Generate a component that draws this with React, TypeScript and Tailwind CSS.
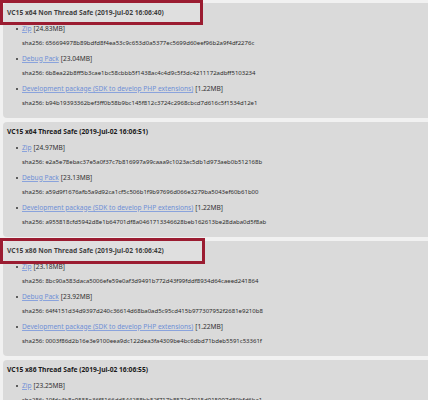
import React from "react";

type Item = { label: string; size: string; sha: string };
type Panel = { title: string; items: Item[] };

const DEV = "Development package (SDK to develop PHP extensions)";

const panels: Panel[] = [
  {
    title: "VC15 x64 Non Thread Safe (2019-Jul-02 16:06:40)",
    items: [
      { label: "Zip", size: "[24.83MB]", sha: "656694978b89bdfd8f4ea53c9c653d0a5377ec5699d60eef96b2a9f4df2276c" },
      { label: "Debug Pack", size: "[23.04MB]", sha: "6b8ea22b8ff5b3cae1bc58cbbb5f1438ac4c4d9c5f3dc4211172adbff5103234" },
      { label: DEV, size: "[1.22MB]", sha: "b94b19393362bef3ff0b58b9bc145f812c3724c2968cbcd7d616c5f1534d12e1" },
    ],
  },
  {
    title: "VC15 x64 Thread Safe (2019-Jul-02 16:06:51)",
    items: [
      { label: "Zip", size: "[24.97MB]", sha: "e2a5e78ebac37e5a0f37c7b816997a99caaa9c1023ac5db1d973aeb0b512168b" },
      { label: "Debug Pack", size: "[23.13MB]", sha: "a59d9f1676afb5a9d92ca1cf5c506b1f9b97696d066e3279ba5043ef60b61b00" },
      { label: DEV, size: "[1.22MB]", sha: "a955818cfd5942d8e1b64701df8a0461713346628beb162613be28daba0d5f8ab" },
    ],
  },
  {
    title: "VC15 x86 Non Thread Safe (2019-Jul-02 16:06:42)",
    items: [
      { label: "Zip", size: "[23.18MB]", sha: "8bc90a583daca5006efe59e0af3d9491b772d43f99fddf8934d64caeed241864" },
      { label: "Debug Pack", size: "[23.92MB]", sha: "64f4151d34d9397d240c36614d68ba0ad5c95cd415b977307952f2681e9210b8" },
      { label: DEV, size: "[1.22MB]", sha: "0003f86d2b16e3e9100eea9dc122dea3fa4309be4bc6dbd71bdeb5591c53361f" },
    ],
  },
  {
    title: "VC15 x86 Thread Safe (2019-Jul-02 16:06:55)",
    items: [
      { label: "Zip", size: "[23.25MB]", sha: "10fdc4b8e9555e36f5166dd544288bb52f717b8572d7015d915997d80bfd6ba1" },
    ],
  },
];

function PanelBox({ panel }: { panel: Panel }) {
  return (
    <div className="w-[440px] shrink-0 rounded-[4px] bg-[#dadada] pt-[3px] pb-[8px] pl-[4px]">
      <div className="flex h-[14px] items-center text-[6.7px] font-bold text-[#1a1a1a] leading-none">
        {panel.title}
      </div>
      <ul className="mt-[2px] flex flex-col gap-[2px] pl-[15px]">
        {panel.items.map((it, i) => (
          <li key={i} className="relative flex flex-col">
            <span className="absolute left-[-6px] top-[6px] h-[2px] w-[2px] rounded-full bg-[#333]" />
            <div className="flex h-[14px] items-center gap-[2px] text-[6.6px] leading-none">
              <span className="text-[#6f8fd6] underline decoration-[#8aa3dc]">{it.label}</span>
              <span className="text-[#333]">{it.size}</span>
            </div>
            <div className="flex h-[14px] items-center text-[6px] leading-none text-[#2a2a2a]">
              sha256: {it.sha}
            </div>
          </li>
        ))}
      </ul>
    </div>
  );
}

export default function App() {
  return (
    <div className="relative h-[400px] w-[428px] overflow-hidden bg-[#f1f1f1] font-['Noto_Sans',sans-serif]">
      <div className="flex flex-col gap-[4px] pl-[3px] pt-[3px]">
        {panels.map((p, i) => (
          <PanelBox key={i} panel={p} />
        ))}
      </div>
      <div className="absolute left-0 top-0 h-[25px] w-[203px] border-[3px] border-[#9b1c31] bg-white/15" />
      <div className="absolute left-0 top-[238px] h-[26px] w-[205px] border-[3px] border-[#9b1c31] bg-white/15" />
    </div>
  );
}
